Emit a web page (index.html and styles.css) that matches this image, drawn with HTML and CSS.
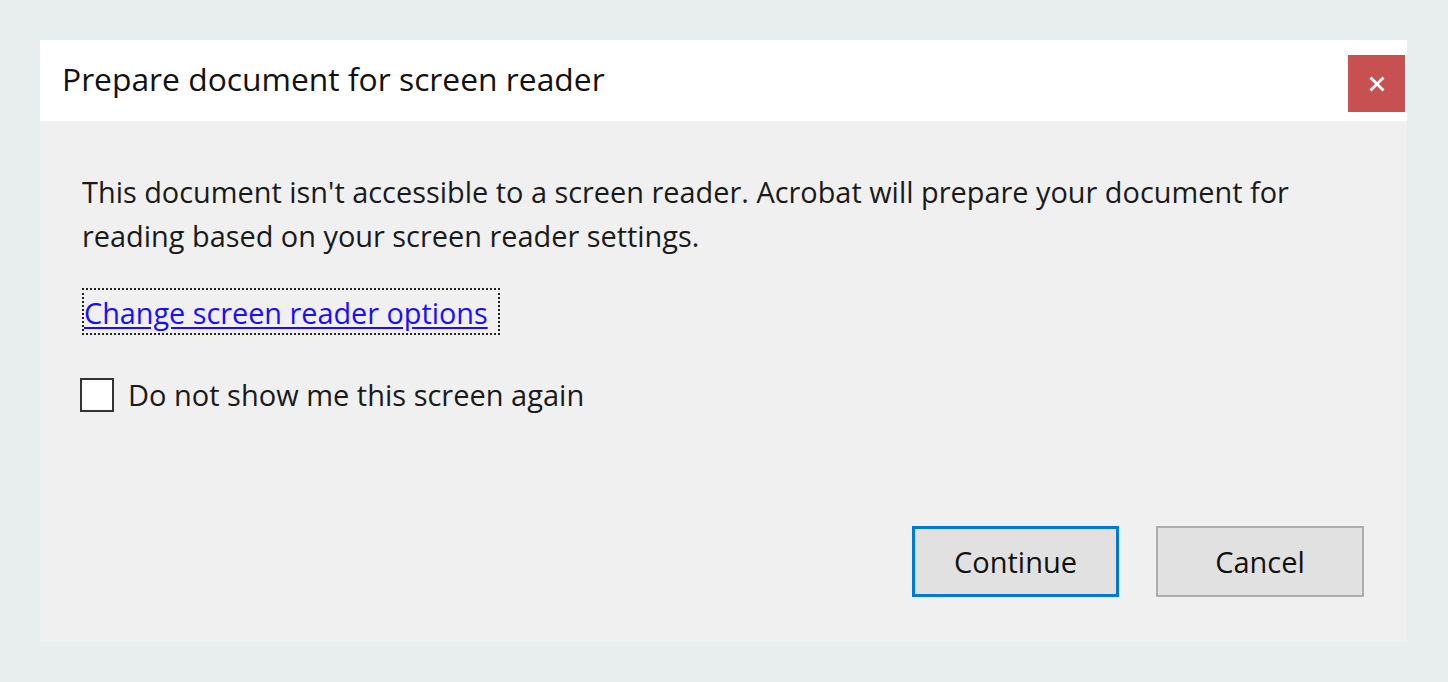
FILE: index.html
```html
<!DOCTYPE html>
<html>
<head>
<meta charset="utf-8">
<link rel="stylesheet" href="styles.css">
</head>
<body>
<div class="dialog">
  <div class="titlebar">
    <div class="title">Prepare document for screen reader</div>
    <button class="close" aria-label="Close">
      <svg width="16" height="16" viewBox="0 0 16 16"><path d="M2.5 2.5 L13.5 13.5 M13.5 2.5 L2.5 13.5" stroke="#fff" stroke-width="2.8" stroke-linecap="square"/></svg>
    </button>
  </div>
  <div class="content">
    <p class="message">This document isn't accessible to a screen reader. Acrobat will prepare your document for reading based on your screen reader settings.</p>
    <div class="linkrow"><a class="link" href="#">Change screen reader options</a></div>
    <label class="check"><span class="box"></span><span class="check-label">Do not show me this screen again</span></label>
    <div class="buttons">
      <button class="btn primary">Continue</button>
      <button class="btn">Cancel</button>
    </div>
  </div>
</div>
</body>
</html>
```

FILE: styles.css
```css
html, body {
  margin: 0;
  padding: 0;
}
body {
  background: #e8eded;
  width: 1448px;
  height: 682px;
  overflow: hidden;
  font-family: "Open Sans", "Noto Sans", sans-serif;
  color: #1a1a1a;
}
.dialog {
  margin: 40px 0 0 40px;
  width: 1367px;
  height: 602px;
  background: #f0f0f0;
  display: flex;
  flex-direction: column;
}
.titlebar {
  height: 81px;
  background: #ffffff;
  display: flex;
  align-items: flex-start;
  justify-content: space-between;
  padding-left: 22px;
  padding-right: 2px;
  box-sizing: border-box;
}
.title {
  font-size: 31.8px;
  line-height: 81px;
  color: #111;
  margin-top: -2px;
}
.close {
  margin-top: 15px;
  width: 57px;
  height: 57px;
  border: none;
  background: #c75050;
  display: flex;
  align-items: center;
  justify-content: center;
  padding: 0;
}
.content {
  flex: 1;
  display: flex;
  flex-direction: column;
  padding: 49px 43px 45px 42px;
  box-sizing: border-box;
}
.message {
  margin: 0;
  font-size: 28.9px;
  line-height: 44px;
}
.linkrow {
  margin-top: 30px;
  display: flex;
}
.link {
  font-size: 28.8px;
  line-height: 41px;
  color: #1a0dff;
  text-decoration: underline;
  text-underline-offset: 3px;
  border: 2px dotted #222;
  padding: 2px 10px 0 0;
}
.check {
  margin-top: 40px;
  display: flex;
  align-items: center;
  gap: 14px;
}
.box {
  width: 30px;
  height: 30px;
  border: 2px solid #333;
  background: #fff;
  margin-left: -2px;
}
.check-label {
  font-size: 29px;
  line-height: 40px;
}
.buttons {
  margin-top: auto;
  display: flex;
  justify-content: flex-end;
  gap: 37px;
}
.btn {
  width: 208px;
  height: 71px;
  box-sizing: border-box;
  background: #e1e1e1;
  border: 2px solid #adadad;
  font-family: inherit;
  font-size: 29px;
  color: #111;
  padding: 0;
}
.btn.primary {
  border: 3px solid #0078d7;
  width: 207px;
}
```
